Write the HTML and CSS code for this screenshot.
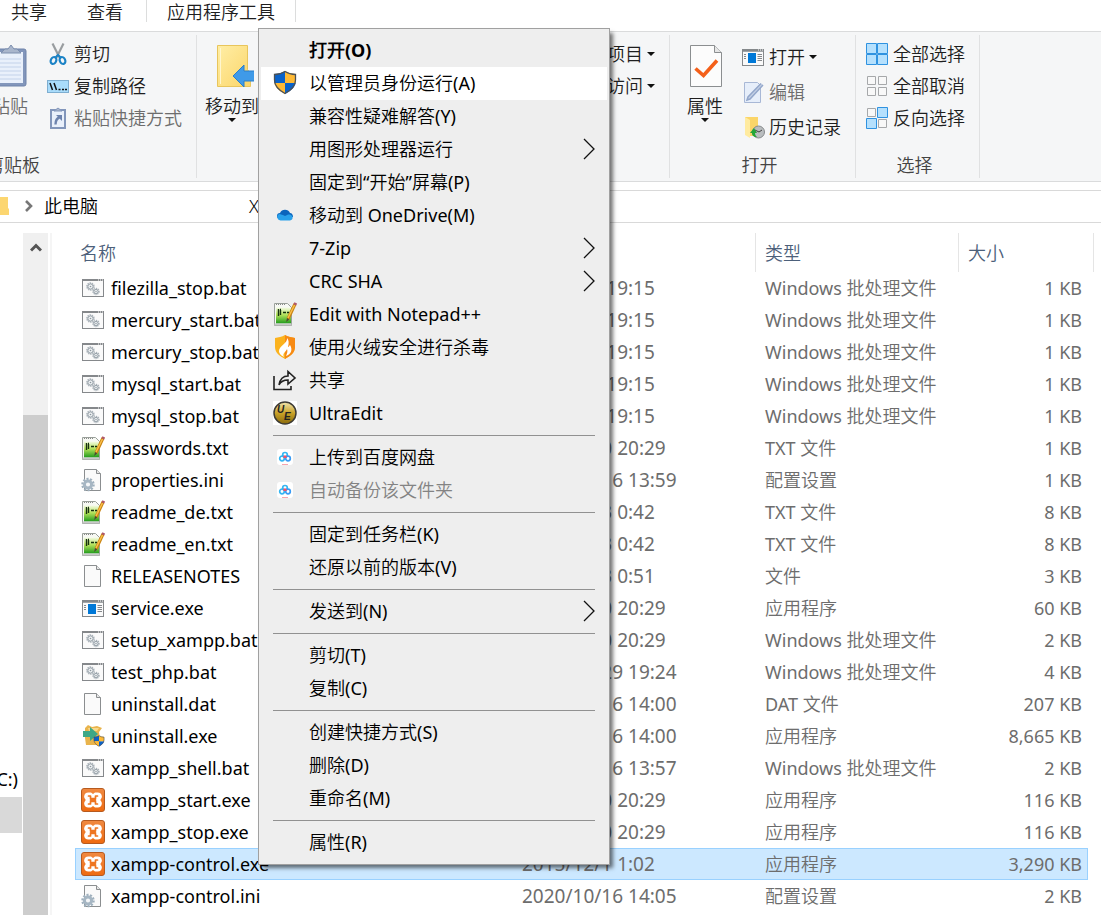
FILE: index.html
```html
<!DOCTYPE html>
<html lang="zh-CN">
<head>
	<meta charset="utf-8">
	<meta name="viewport" content="width=device-width, initial-scale=1">
	<title>xampp</title>
	<link rel="stylesheet" href="styles.css">
</head>
<body>

<!-- Icones -->
<svg class="sprite" aria-hidden="true">
	<defs>
		<linearGradient id="verde" x1="0" y1="0" x2="0" y2="1"><stop offset="0" stop-color="#f4fbe6"/><stop offset=".45" stop-color="#b5e35c"/><stop offset="1" stop-color="#1f9a1c"/></linearGradient>
		<linearGradient id="laranja" x1="0" y1="0" x2="0" y2="1"><stop offset="0" stop-color="#f08a42"/><stop offset="1" stop-color="#ee6a10"/></linearGradient>
		<linearGradient id="pasta" x1="0" y1="0" x2="1" y2="1"><stop offset="0" stop-color="#ffeea6"/><stop offset="1" stop-color="#fbd568"/></linearGradient>
		<linearGradient id="ouro" x1="0" y1="0" x2="0" y2="1"><stop offset="0" stop-color="#f2e6b0"/><stop offset=".5" stop-color="#c9a227"/><stop offset="1" stop-color="#8a6a0c"/></linearGradient>
		<clipPath id="clipEscudo"><path d="M12 1C9 3 5 4 1 4v6c0 7 5 11 11 14 6-3 11-7 11-14V4c-4 0-8-1-11-3z"/></clipPath>
	</defs>
	<symbol id="bat" viewBox="0 0 24 24">
		<rect x="1.500" y="3.500" width="21" height="17" fill="#fafafa" stroke="#85888b"/>
		<path d="M1 4h22" stroke="#85888b" stroke-width="2"/>
		<path d="M17 4h1M19 4h1M21 4h1" stroke="#fff"/>
		<circle cx="9.500" cy="10.500" r="3.400" fill="none" stroke="#a9b2b9" stroke-width="1.800" stroke-dasharray="1.300 .8"/>
		<circle cx="9.500" cy="10.500" r="2.600" fill="#eef1f3" stroke="#98a2aa"/>
		<circle cx="9.500" cy="10.500" r=".8" fill="#8d979f"/>
		<circle cx="15" cy="15.500" r="2.900" fill="none" stroke="#a9b2b9" stroke-width="1.600" stroke-dasharray="1.200 .7"/>
		<circle cx="15" cy="15.500" r="2.100" fill="#eef1f3" stroke="#98a2aa"/>
		<circle cx="15" cy="15.500" r=".7" fill="#8d979f"/>
	</symbol>
	<symbol id="npp" viewBox="0 0 24 24">
		<path d="M1.500 1.500h13l4 4v18h-17z" fill="#f7f9f4" stroke="#9aa09a"/>
		<path d="M3 5.500h15v16H3z" fill="url(#verde)"/>
		<path d="M1.500 22.500h17" stroke="#c9c9c9" stroke-width="2"/>
		<path d="M3 2.500h10" stroke="#888" stroke-dasharray="1 1"/>
		<path d="M5.500 7v7M7.500 8v5M7 7.500h1M10 10.500h3M14 10.500h2" stroke="#16320e" stroke-width="1.400"/>
		<path d="M22 2l-7 15" stroke="#c98413" stroke-width="3.200"/>
		<path d="M21.500 3l-6.500 13" stroke="#fcc04a" stroke-width="1.400"/>
		<path d="M22.800.8l-1 2" stroke="#b0586a" stroke-width="3"/>
		<path d="M14 16l-.8 4 3-2.500z" fill="#4c4636"/>
	</symbol>
	<symbol id="arquivo" viewBox="0 0 24 24">
		<path d="M3.500 1.500h12l4 4v17h-16z" fill="#fafafa" stroke="#8b8e90"/>
		<path d="M15.500 1.500v4h4" fill="#e6e6e6" stroke="#8b8e90"/>
	</symbol>
	<symbol id="ini" viewBox="0 0 24 24">
		<path d="M3.500 1.500h12l4 4v17h-16z" fill="#fafafa" stroke="#8b8e90"/>
		<path d="M15.500 1.500v4h4" fill="#e6e6e6" stroke="#8b8e90"/>
		<circle cx="7" cy="16.500" r="5.500" fill="none" stroke="#9fb0bd" stroke-width="2.500" stroke-dasharray="2 1.400"/>
		<circle cx="7" cy="16.500" r="3.600" fill="#f4f6f8" stroke="#a6b6c3" stroke-width="3"/>
	</symbol>
	<symbol id="exe" viewBox="0 0 24 24">
		<rect x="1.500" y="4.500" width="21" height="16" fill="#fafafa" stroke="#85888b"/>
		<path d="M1 5.500h22" stroke="#85888b" stroke-width="2.500"/>
		<path d="M17 5h1M19 5h1M21 5h1" stroke="#fff"/>
		<rect x="7" y="8" width="8" height="10" fill="#0078d7"/>
		<path d="M3 9.500h2M3 11.500h2M3 13.500h2M16.500 9.500H21M16.500 11.500H21M16.500 13.500H21M16.500 15.500H21" stroke="#85888b"/>
	</symbol>
	<symbol id="escudo" viewBox="0 0 24 25">
		<g clip-path="url(#clipEscudo)">
			<path d="M0 0h12v13H0zM12 13h12v12H12z" fill="#0a62c9"/>
			<path d="M12 0h12v13H12zM0 13h12v12H0z" fill="#ffba35"/>
		</g>
		<path d="M12 1.500C9 3.500 5 4.500 1.500 4.500V10c0 6.500 5 10.500 10.500 13.500C17.500 20.500 22.500 16.500 22.500 10V4.500C19 4.500 15 3.500 12 1.500z" fill="none" stroke="#4b5157" stroke-width="1.300"/>
	</symbol>
	<symbol id="instalador" viewBox="0 0 24 24">
		<path d="M4 4l3-3 4 2 5-1 5 2-3 4 2 13H5L4 14z" fill="#e9b44c"/>
		<path d="M7 4h11l-2 3H8z" fill="#f8d88a"/>
		<path d="M2 7h7V3l8 7-8 7v-4H2z" fill="#3ea886"/>
		<svg x="12" y="11" width="12" height="12"><use href="#escudo"/></svg>
	</symbol>
	<symbol id="xampp" viewBox="0 0 24 24">
		<rect x=".5" y=".5" width="23" height="23" rx="2.500" fill="url(#laranja)" stroke="#b65a1f"/>
		<path d="M7 4.500h3l2 1.500 2-1.500h3a4 4 0 0 1 3 6.500l-.8 1 .8 1a4 4 0 0 1-3 6.500h-3L12 18l-2 1.500H7A4 4 0 0 1 4 13l.8-1L4 11a4 4 0 0 1 3-6.500z" fill="#fff"/>
		<path d="M7.500 8h2v2.500h5V8h2M7.500 16h2v-2.500h5V16h2M9.500 12h5" fill="none" stroke="#ee7420" stroke-width="1.700" stroke-linecap="round" stroke-linejoin="round"/>
	</symbol>
	<symbol id="baidu" viewBox="0 0 16 16">
		<rect width="16" height="16" rx="3" fill="#fff"/>
		<g fill="none" stroke-width="1.700"><circle cx="8" cy="5.800" r="2.300" stroke="#35b6f2"/><circle cx="5" cy="9.500" r="2.300" stroke="#35b6f2"/><circle cx="11" cy="9.500" r="2.300" stroke="#3b9cf5"/><path d="M6.500 8.500l1.500-1.300 1.500 1.300" stroke="#f0536b"/></g>
		<path d="M5 15.500h6" stroke="#f6a4ae"/>
	</symbol>
	<symbol id="seta" viewBox="0 0 12 22">
		<path d="M1 1l10 10L1 21" fill="none" stroke="#111" stroke-width="1.300"/>
	</symbol>
	<symbol id="baixo" viewBox="0 0 8 4"><path d="M0 0h8L4 4z" fill="#111"/></symbol>
</svg>

<div class="janela">
	<nav class="abas">
		<a class="aba" href="#">共享</a>
		<a class="aba" href="#">查看</a>
		<a class="aba aba-contexto" href="#">应用程序工具</a>
	</nav>

	<div class="faixa">
		<section class="grupo grupo-transferencia">
			<div class="grupo-corpo">
				<button class="botao-grande apagado">
					<svg width="36" height="44" viewBox="0 0 36 44">
						<rect x="2" y="5" width="32" height="37" rx="2" fill="#8296bb" stroke="#6f83aa"/>
						<path d="M5 8h26v31H5z" fill="#e9f0fb"/>
						<path d="M7 15h22M7 19h22M7 23h22M7 27h22M7 31h22M7 35h22" stroke="#c3d2ea"/>
						<path d="M9 9l4-4h3l3-4 3 4h3l4 4z" fill="#a9b6cc" stroke="#7d8fae"/>
					</svg>
					<span>粘贴</span>
				</button>
				<div class="coluna">
					<button class="botao">
						<svg width="24" height="24" viewBox="0 0 24 24">
							<path d="M6.500 1.500l7 14M17.500 1.500l-7 14" stroke="#999da0" stroke-width="2.200"/>
							<ellipse cx="7.500" cy="18.500" rx="2.700" ry="3.600" transform="rotate(25 7.500 18.500)" fill="none" stroke="#1c83c6" stroke-width="2.200"/>
							<ellipse cx="16.500" cy="18.500" rx="2.700" ry="3.600" transform="rotate(-25 16.500 18.500)" fill="none" stroke="#1c83c6" stroke-width="2.200"/>
							<path d="M9 16l3-3 3 3" fill="none" stroke="#1c83c6" stroke-width="2"/>
						</svg>
						剪切
					</button>
					<button class="botao">
						<svg width="24" height="24" viewBox="0 0 24 24">
							<rect x="1.500" y="6.500" width="21" height="12" fill="#a9dcfb" stroke="#7eaed0"/>
							<path d="M4 9l2.500 7M8 9l2.500 7M12.500 15.500h2M16 15.500h2M19 15.500h2" stroke="#111" stroke-width="1.500"/>
						</svg>
						复制路径
					</button>
					<button class="botao apagado">
						<svg width="24" height="24" viewBox="0 0 24 24">
							<rect x="5" y="4" width="14" height="18" fill="#e9f0fb" stroke="#8296bb" stroke-width="2"/>
							<path d="M8 5l4-3 4 3z" fill="#a9b6cc" stroke="#8296bb"/>
							<path d="M9.500 18.500c0-4 1-6 4-7" fill="none" stroke="#6d83ae" stroke-width="2.400"/>
							<path d="M10 9h6v6z" fill="#6d83ae"/>
						</svg>
						粘贴快捷方式
					</button>
				</div>
			</div>
			<h2>剪贴板</h2>
		</section>

		<section class="grupo grupo-organizar">
			<div class="grupo-corpo">
				<button class="botao-grande">
					<svg width="44" height="44" viewBox="0 0 44 44">
						<path d="M7.500 1.500h30v24l3 4v13h-33z" fill="url(#pasta)" stroke="#e8c55c"/>
						<path d="M10.500 4v36" stroke="#fff6cf"/>
						<path d="M23 32l11-11v6h12v10H34v6z" fill="#3f9ae8" stroke="#2b7fc9"/>
					</svg>
					<span>移动到</span>
					<svg width="8" height="4"><use href="#baixo"/></svg>
				</button>
			</div>
		</section>

		<section class="grupo grupo-novo">
			<div class="grupo-corpo">
				<div class="coluna">
					<button class="botao">新建项目 <svg width="8" height="4"><use href="#baixo"/></svg></button>
					<button class="botao">轻松访问 <svg width="8" height="4"><use href="#baixo"/></svg></button>
				</div>
			</div>
		</section>

		<section class="grupo grupo-abrir">
			<div class="grupo-corpo">
				<button class="botao-grande">
					<svg width="36" height="44" viewBox="0 0 36 44">
						<path d="M3.500 1.500h24l7 7v34h-31z" fill="#fcfcfc" stroke="#8b8e90"/>
						<path d="M27.500 1.500v7h7" fill="#e6e6e6" stroke="#8b8e90"/>
						<path d="M8.500 24.500l8 7L30 16.500" fill="none" stroke="#f4601a" stroke-width="3.600"/>
					</svg>
					<span>属性</span>
					<svg width="8" height="4"><use href="#baixo"/></svg>
				</button>
				<div class="coluna coluna-larga">
					<button class="botao"><svg width="24" height="24"><use href="#exe"/></svg>打开 <svg width="8" height="4"><use href="#baixo"/></svg></button>
					<button class="botao apagado">
						<svg width="24" height="24" viewBox="0 0 24 24">
							<path d="M3.500 2.500h13l3 3v17h-16z" fill="#e6eefa" stroke="#a8b8d6"/>
							<path d="M22 5L9 19l-3 1 1-3L20 3.500" fill="#c4d1e6" stroke="#93a7cb" stroke-width="1.500"/>
						</svg>
						编辑
					</button>
					<button class="botao">
						<svg width="24" height="24" viewBox="0 0 24 24">
							<path d="M4 2h13v19H8l-4-2z" fill="#fbd568"/>
							<path d="M4 2l5 3v18l-5-3z" fill="#ffeba0"/>
							<circle cx="17.500" cy="17" r="6" fill="#b9bdbf" stroke="#85898b"/>
							<path d="M14 15l4 2 3-2" fill="none" stroke="#444"/>
							<path d="M9 18l4-5 3 5h-2c0 2 1 3 2 4-4 0-5-2-5-4z" fill="#23a638"/>
						</svg>
						历史记录
					</button>
				</div>
			</div>
			<h2>打开</h2>
		</section>

		<section class="grupo grupo-selecao">
			<div class="grupo-corpo">
				<div class="coluna">
					<button class="botao">
						<svg width="24" height="24" viewBox="0 0 24 24">
							<path d="M1.500 1.500h10v10h-10zM12.500 1.500h10v10h-10zM1.500 12.500h10v10h-10zM12.500 12.500h10v10h-10z" fill="#b5e0fd" stroke="#2f92e0"/>
						</svg>
						全部选择
					</button>
					<button class="botao">
						<svg width="24" height="24" viewBox="0 0 24 24">
							<path d="M2.500 2.500h8v8h-8zM13.500 2.500h8v8h-8zM2.500 13.500h8v8h-8zM13.500 13.500h8v8h-8z" fill="#f8f8f8" stroke="#a6a8aa"/>
						</svg>
						全部取消
					</button>
					<button class="botao">
						<svg width="24" height="24" viewBox="0 0 24 24">
							<path d="M2.500 2.500h8v8h-8zM13.500 13.500h8v8h-8z" fill="#f8f8f8" stroke="#a6a8aa"/>
							<path d="M12.500 1.500h10v10h-10zM1.500 12.500h10v10h-10z" fill="#b5e0fd" stroke="#2f92e0"/>
						</svg>
						反向选择
					</button>
				</div>
			</div>
			<h2>选择</h2>
		</section>
	</div>

	<div class="endereco">
		<svg width="9" height="18" viewBox="0 0 9 18"><path d="M0 0h8v11l1 1v6H0z" fill="#fcd670"/></svg>
		<svg class="divisa" width="8" height="12" viewBox="0 0 8 12"><path d="M1 1l5 5-5 5" fill="none" stroke="#777" stroke-width="2.600"/></svg>
		<a href="#">此电脑</a>
		<a class="pasta-atual" href="#">XAMPP</a>
	</div>

	<div class="conteudo">
		<aside class="arvore">
			<div class="no">Windows (C:)</div>
			<div class="no no-ativo"></div>
		</aside>
		<div class="rolagem">
			<svg width="12" height="9" viewBox="0 0 12 9"><path d="M1 7.500l5-5 5 5" fill="none" stroke="#555" stroke-width="3"/></svg>
			<div class="polegar"></div>
		</div>
		<main class="lista">
			<table>
				<colgroup><col><col class="col-data"><col class="col-tipo"><col class="col-tamanho"><col class="col-borda"></colgroup>
				<thead>
					<tr><th>名称</th><th></th><th>类型</th><th>大小</th><th></th></tr>
				</thead>
				<tbody>
					<tr><td><svg><use href="#bat"/></svg>filezilla_stop.bat</td><td>2013/6/7 19:15</td><td>Windows 批处理文件</td><td>1 KB</td><td></td></tr>
					<tr><td><svg><use href="#bat"/></svg>mercury_start.bat</td><td>2013/6/7 19:15</td><td>Windows 批处理文件</td><td>1 KB</td><td></td></tr>
					<tr><td><svg><use href="#bat"/></svg>mercury_stop.bat</td><td>2013/6/7 19:15</td><td>Windows 批处理文件</td><td>1 KB</td><td></td></tr>
					<tr><td><svg><use href="#bat"/></svg>mysql_start.bat</td><td>2013/6/7 19:15</td><td>Windows 批处理文件</td><td>1 KB</td><td></td></tr>
					<tr><td><svg><use href="#bat"/></svg>mysql_stop.bat</td><td>2013/6/7 19:15</td><td>Windows 批处理文件</td><td>1 KB</td><td></td></tr>
					<tr><td><svg><use href="#npp"/></svg>passwords.txt</td><td>2013/3/30 20:29</td><td>TXT 文件</td><td>1 KB</td><td></td></tr>
					<tr><td><svg><use href="#ini"/></svg>properties.ini</td><td>2020/10/16 13:59</td><td>配置设置</td><td>1 KB</td><td></td></tr>
					<tr><td><svg><use href="#npp"/></svg>readme_de.txt</td><td>2019/9/23 0:42</td><td>TXT 文件</td><td>8 KB</td><td></td></tr>
					<tr><td><svg><use href="#npp"/></svg>readme_en.txt</td><td>2019/9/23 0:42</td><td>TXT 文件</td><td>8 KB</td><td></td></tr>
					<tr><td><svg><use href="#arquivo"/></svg>RELEASENOTES</td><td>2019/9/23 0:51</td><td>文件</td><td>3 KB</td><td></td></tr>
					<tr><td><svg><use href="#exe"/></svg>service.exe</td><td>2013/3/30 20:29</td><td>应用程序</td><td>60 KB</td><td></td></tr>
					<tr><td><svg><use href="#bat"/></svg>setup_xampp.bat</td><td>2013/3/30 20:29</td><td>Windows 批处理文件</td><td>2 KB</td><td></td></tr>
					<tr><td><svg><use href="#bat"/></svg>test_php.bat</td><td>2017/11/29 19:24</td><td>Windows 批处理文件</td><td>4 KB</td><td></td></tr>
					<tr><td><svg><use href="#arquivo"/></svg>uninstall.dat</td><td>2020/10/16 14:00</td><td>DAT 文件</td><td>207 KB</td><td></td></tr>
					<tr><td><svg><use href="#instalador"/></svg>uninstall.exe</td><td>2020/10/16 14:00</td><td>应用程序</td><td>8,665 KB</td><td></td></tr>
					<tr><td><svg><use href="#bat"/></svg>xampp_shell.bat</td><td>2020/10/16 13:57</td><td>Windows 批处理文件</td><td>2 KB</td><td></td></tr>
					<tr><td><svg><use href="#xampp"/></svg>xampp_start.exe</td><td>2013/3/30 20:29</td><td>应用程序</td><td>116 KB</td><td></td></tr>
					<tr><td><svg><use href="#xampp"/></svg>xampp_stop.exe</td><td>2013/3/30 20:29</td><td>应用程序</td><td>116 KB</td><td></td></tr>
					<tr class="selecionado"><td><svg><use href="#xampp"/></svg>xampp-control.exe</td><td>2015/12/1 1:02</td><td>应用程序</td><td>3,290 KB</td><td></td></tr>
					<tr><td><svg><use href="#ini"/></svg>xampp-control.ini</td><td>2020/10/16 14:05</td><td>配置设置</td><td>2 KB</td><td></td></tr>
				</tbody>
			</table>
		</main>
	</div>

	<!-- Menu de contexto -->
	<div class="menu" role="menu">
		<button class="item padrao"><i></i>打开(O)</button>
		<button class="item ativo"><i><svg width="24" height="25"><use href="#escudo"/></svg></i>以管理员身份运行(A)</button>
		<button class="item"><i></i>兼容性疑难解答(Y)</button>
		<button class="item"><i></i>用图形处理器运行<svg class="sub"><use href="#seta"/></svg></button>
		<button class="item"><i></i>固定到“开始”屏幕(P)</button>
		<button class="item"><i><svg width="16" height="12" viewBox="0 0 16 12"><path d="M3 10a3 3 0 0 1 0-6 5.500 5.500 0 0 1 10 0c2 0 3 2 3 4z" fill="#0a64bc"/><path d="M3.500 11.500A3.500 3.500 0 0 1 2 5c2 0 4 1 6 2 2-1 4-2 6-1 2 1 2.500 5-1 5.500z" fill="#28a0ea"/></svg></i>移动到 OneDrive(M)</button>
		<button class="item"><i></i>7-Zip<svg class="sub"><use href="#seta"/></svg></button>
		<button class="item"><i></i>CRC SHA<svg class="sub"><use href="#seta"/></svg></button>
		<button class="item"><i><svg width="24" height="24"><use href="#npp"/></svg></i>Edit with Notepad++</button>
		<button class="item"><i><svg width="24" height="24" viewBox="0 0 24 24"><path d="M12 0c3 2 7 2 10 3v9c0 6-5 9-10 12C7 21 2 18 2 12V3c3-1 7-1 10-3z" fill="#fbb21d"/><path d="M12 0c3 2 7 2 10 3v9c0 6-5 9-10 12z" fill="#f78a14"/><path d="M14 3c1 5-8 8-8 13 0 3 3 5 5 6-2-4 2-5 3-8 1 2 0 5-1 7 5-2 7-6 4-11-1 1-1 2-2 2 1-4 1-7-1-9z" fill="#fff"/></svg></i>使用火绒安全进行杀毒</button>
		<button class="item"><i><svg width="24" height="24" viewBox="0 0 24 24"><path d="M1 8v13.500h17V18M6 17c1-6 4-9 9-9V3.500l7 6.500-7 6v-4c-4 0-7 1-9 5z" fill="none" stroke="#222" stroke-width="1.600"/></svg></i>共享</button>
		<button class="item"><i><svg width="24" height="24" viewBox="0 0 24 24"><path d="M0 0h24v24H0z" fill="#fff"/><circle cx="12" cy="12" r="11" fill="url(#ouro)" stroke="#3c3a34" stroke-width="1.500"/><text class="letra" x="4" y="12">U</text><text class="letra" x="11" y="19">E</text></svg></i>UltraEdit</button>
		<hr>
		<button class="item"><i><svg width="16" height="16"><use href="#baidu"/></svg></i>上传到百度网盘</button>
		<button class="item" disabled><i><svg width="16" height="16"><use href="#baidu"/></svg></i>自动备份该文件夹</button>
		<hr>
		<button class="item"><i></i>固定到任务栏(K)</button>
		<button class="item"><i></i>还原以前的版本(V)</button>
		<hr>
		<button class="item"><i></i>发送到(N)<svg class="sub"><use href="#seta"/></svg></button>
		<hr>
		<button class="item"><i></i>剪切(T)</button>
		<button class="item"><i></i>复制(C)</button>
		<hr>
		<button class="item"><i></i>创建快捷方式(S)</button>
		<button class="item"><i></i>删除(D)</button>
		<button class="item"><i></i>重命名(M)</button>
		<hr>
		<button class="item"><i></i>属性(R)</button>
	</div>
</div>

</body>
</html>
```

FILE: styles.css
```css
* {
	box-sizing: border-box;
}

body {
	margin: 0;
	background-color: white;
	color: #1e1e1e;
	font-family: "Noto Sans", "Noto Sans CJK SC DemiLight", "Noto Sans CJK SC Light", "Noto Sans CJK SC", sans-serif;
	font-size: 18px;
	line-height: 24px;
}

a {
	color: inherit;
	text-decoration: none;
}

button {
	padding: 0;
	border: 0;
	background: none;
	color: inherit;
	font: inherit;
	white-space: nowrap;
}

svg {
	flex-shrink: 0;
}

.sprite {
	position: absolute;
	width: 0;
	height: 0;
}

.janela {
	position: relative;
	display: flex;
	flex-direction: column;
	height: 100vh;
	overflow: hidden;
}

/* Abas */
.abas {
	display: flex;
	height: 31px;
	flex-shrink: 0;
	padding-left: 11px;
	gap: 40px;
	font-weight: 300;
}

.aba-contexto {
	height: 22px;
	margin-left: -17px;
	padding: 0 20px;
	border-left: 1px solid #dcdddd;
	border-right: 1px solid #dcdddd;
}

/* Faixa de opções */
.faixa {
	display: flex;
	height: 151px;
	flex-shrink: 0;
	padding: 3px 0;
	background-color: #f5f6f7;
	border-top: 1px solid #dadbdc;
	border-bottom: 1px solid #dadbdc;
	font-weight: 300;
}

.grupo {
	display: flex;
	flex-direction: column;
	justify-content: space-between;
	flex-shrink: 0;
	padding: 3px 0 1px;
	border-right: 1px solid #e0e1e2;
}

.grupo h2 {
	margin: 0;
	color: #444;
	font-size: 18px;
	font-weight: inherit;
	text-align: center;
}

.grupo-corpo {
	display: flex;
	gap: 18px;
}

.grupo-transferencia {
	width: 367px;
	margin-left: -170px;
}

.grupo-transferencia .grupo-corpo {
	justify-content: flex-end;
	padding-right: 14px;
}

.grupo-organizar {
	width: 258px;
	padding-left: 8px;
}

.grupo-novo {
	width: 215px;
	padding-right: 14px;
}

.grupo-novo .grupo-corpo {
	justify-content: flex-end;
}

.grupo-abrir {
	width: 186px;
}

.grupo-abrir .grupo-corpo {
	padding-left: 17px;
}

.grupo-abrir h2 {
	padding-right: 6px;
}

.grupo-selecao {
	width: 124px;
}

.grupo-selecao .grupo-corpo {
	padding-left: 9px;
}

.grupo-selecao h2 {
	padding-right: 6px;
}

.coluna {
	display: flex;
	flex-direction: column;
	align-items: flex-start;
	gap: 8px;
	padding-top: 4px;
}

.coluna-larga {
	gap: 11px;
	padding-top: 7px;
}

.botao {
	display: flex;
	align-items: center;
	gap: 4px;
}

.botao-grande {
	display: flex;
	flex-direction: column;
	align-items: center;
	align-self: flex-start;
	padding-top: 6px;
}

.botao-grande span {
	margin-top: 6px;
}

.apagado {
	color: #6d6d6d;
}

/* Barra de endereço */
.endereco {
	display: flex;
	align-items: center;
	height: 33px;
	flex-shrink: 0;
	margin-top: 8px;
	padding-bottom: 1px;
	border-top: 1px solid #d9d9d9;
	border-bottom: 1px solid #d9d9d9;
	color: #000;
	font-weight: 300;
}

.divisa {
	margin: 0 11px 0 16px;
}

.pasta-atual {
	margin-left: 151px;
}

/* Conteúdo */
.conteudo {
	display: flex;
	flex: 1;
	min-height: 0;
	padding-top: 10px;
}

.arvore {
	display: flex;
	flex-direction: column;
	justify-content: flex-end;
	width: 23px;
	flex-shrink: 0;
	padding: 0 1px 82px 0;
	overflow: hidden;
	color: #000;
}

.no {
	display: flex;
	align-items: center;
	justify-content: flex-end;
	height: 36px;
	flex-shrink: 0;
	padding-right: 4px;
	white-space: nowrap;
}

.no-ativo {
	background-color: #d9d9d9;
}

.rolagem {
	display: flex;
	flex-direction: column;
	align-items: center;
	width: 25px;
	flex-shrink: 0;
	padding-top: 10px;
	background-color: #f0f0f0;
}

.polegar {
	width: 100%;
	flex: 1;
	margin-top: 163px;
	background-color: #cdcdcd;
}

.lista {
	flex: 1;
	margin-left: 2px;
	padding: 0 7px 0 23px;
	border-left: 2px solid #f5f5f5;
	overflow: hidden;
}

.lista table {
	width: 100%;
	table-layout: fixed;
	border-spacing: 0;
}

.col-data {
	width: 243px;
}

.col-tipo {
	width: 203px;
}

.col-tamanho {
	width: 130px;
}

.col-borda {
	width: 6px;
}

.lista th {
	height: 39px;
	padding: 0 0 0 9px;
	color: #4c607a;
	font-weight: inherit;
	text-align: left;
}

.lista th:first-child {
	padding-left: 5px;
}

.lista th:nth-child(3),
.lista th:nth-child(4) {
	border-left: 1px solid #e5e5e5;
}

.lista th:last-child {
	padding: 0;
	border-right: 1px solid #e5e5e5;
}

.lista td {
	height: 32px;
	padding: 0 0 0 10px;
	color: #6d6d6d;
	white-space: nowrap;
}

.lista td:first-child {
	padding-left: 6px;
	color: #000;
}

.lista td:nth-child(2) {
	font-size: 19px;
}

.lista td:nth-child(4) {
	padding-right: 6px;
	text-align: right;
}

.lista td:last-child {
	padding: 0;
}

.lista td svg {
	width: 24px;
	height: 24px;
	margin-right: 6px;
	vertical-align: -5px;
}

.selecionado td:not(:last-child) {
	background-color: #cce8ff;
	border-top: 1px solid #99d1ff;
	border-bottom: 1px solid #99d1ff;
}

.selecionado td:first-child {
	padding-left: 5px;
	border-left: 1px solid #99d1ff;
}

.selecionado td:nth-child(4) {
	padding-right: 5px;
	border-right: 1px solid #99d1ff;
}

/* Menu de contexto */
.menu {
	position: absolute;
	top: 28px;
	left: 258px;
	width: 352px;
	padding: 5px 2px;
	background-color: #eee;
	border: 1px solid #a0a0a0;
	box-shadow: 4px 4px 4px -1px rgba(0, 0, 0, 0.55);
	color: #000;
}

.item {
	display: flex;
	align-items: center;
	width: 100%;
	height: 33px;
	padding: 0 12px 2px;
}

.item i {
	display: flex;
	justify-content: center;
	width: 24px;
	margin-right: 12px;
}

.item:disabled {
	color: #838383;
}

.padrao {
	font-weight: bold;
}

.ativo {
	background-color: white;
}

.sub {
	width: 12px;
	height: 22px;
	margin-left: auto;
}

.menu hr {
	height: 1px;
	margin: 5px 12px;
	border: 0;
	background-color: #919191;
}

.letra {
	font: italic bold 10px "Liberation Sans", sans-serif;
	fill: #222;
}
```
